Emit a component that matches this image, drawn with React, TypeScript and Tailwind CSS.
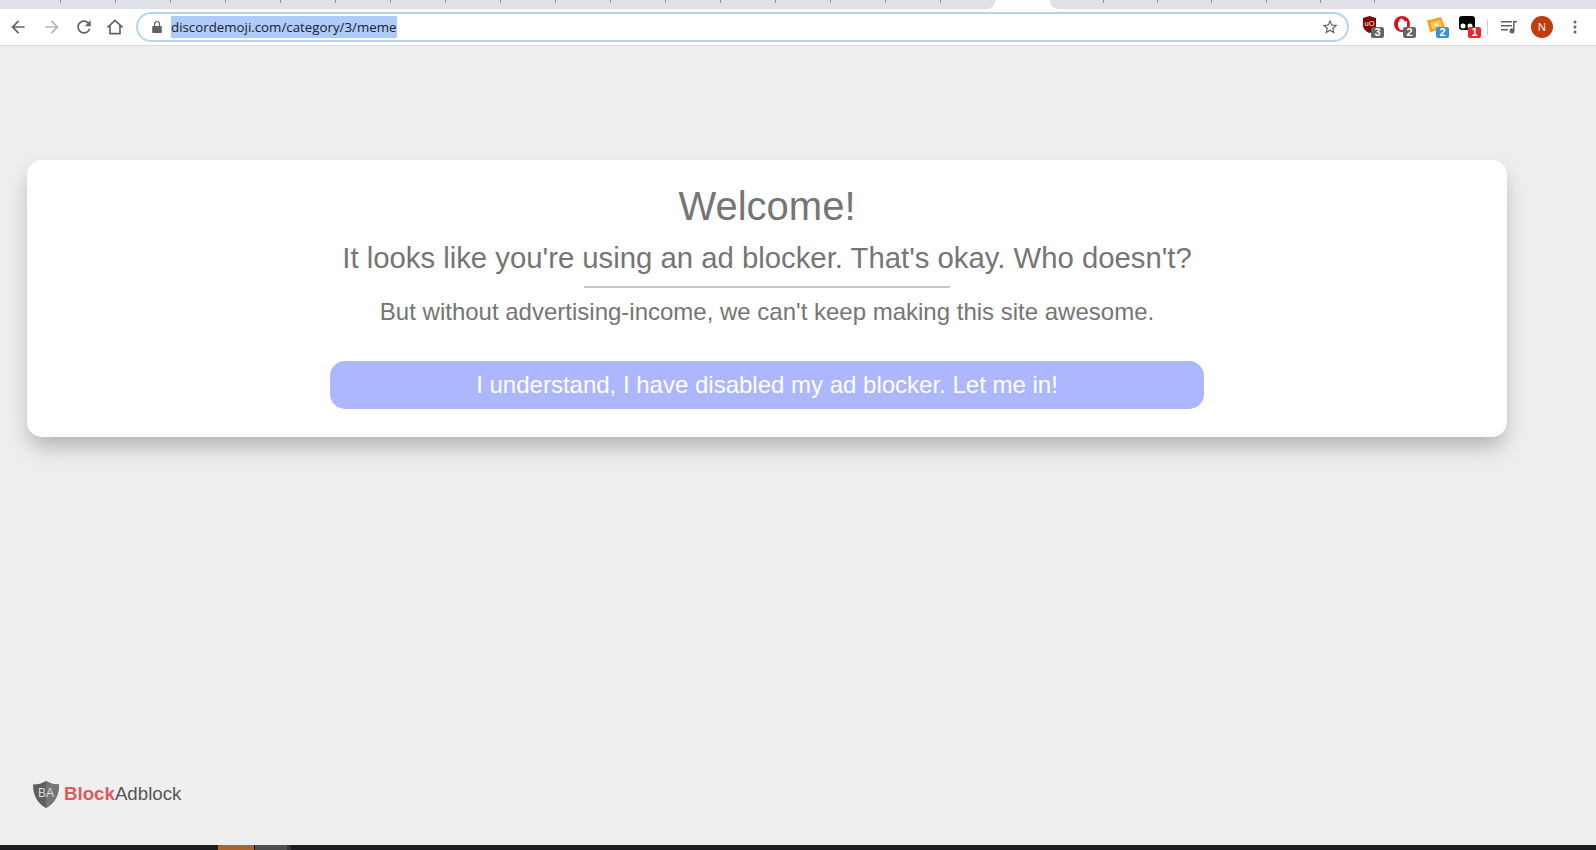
import { ReactNode } from "react";

const leftTabMarks = [0, 1, 2, 3, 4, 5, 6, 7, 8, 9, 10, 11, 12, 13, 14, 15, 16];
const rightTabMarks = [0, 1, 2, 3, 4, 5];

function Badge({ color, children }: { color: string; children: ReactNode }) {
  return (
    <span
      className={`absolute left-[9px] top-[11px] flex h-[11px] w-[13px] items-center justify-center rounded-[2px] font-['Liberation_Sans',sans-serif] text-[11px] leading-none font-bold text-white ${color}`}
    >
      {children}
    </span>
  );
}

function Toolbar() {
  return (
    <div className="flex h-[37px] shrink-0 items-center border-b border-[#d9dadc] bg-white">
      <div className="ml-[8px] flex items-center gap-[8px]">
        <svg className="h-[20px] w-[20px]" viewBox="0 0 24 24" fill="#5f6368">
          <path d="M20 11H7.83l5.59-5.59L12 4l-8 8 8 8 1.41-1.41L7.83 13H20v-2z" />
        </svg>
        <svg className="ml-[6px] h-[20px] w-[20px]" viewBox="0 0 24 24" fill="#b4b6b9">
          <path d="M4 11h12.17l-5.59-5.59L12 4l8 8-8 8-1.41-1.41L16.17 13H4v-2z" />
        </svg>
        <svg className="ml-[4px] h-[20px] w-[20px]" viewBox="0 0 24 24" fill="#5f6368">
          <path d="M17.65 6.35C16.2 4.9 14.21 4 12 4c-4.42 0-7.99 3.58-7.99 8s3.57 8 7.99 8c3.73 0 6.84-2.55 7.73-6h-2.08c-.82 2.33-3.04 4-5.65 4-3.31 0-6-2.69-6-6s2.69-6 6-6c1.66 0 3.14.69 4.22 1.78L13 11h7V4l-2.35 2.35z" />
        </svg>
        <svg className="ml-[3px] h-[20px] w-[20px]" viewBox="0 0 24 24" fill="none" stroke="#5f6368" strokeWidth="2">
          <path d="M3 12.5 12 4l9 8.5M6 10.5V20h12v-9.5" strokeLinejoin="round" />
        </svg>
      </div>

      <div className="ml-[11px] flex h-[30px] w-[1213px] items-center rounded-full border-2 border-[#b6d3f7] pr-[8px] pl-[12px]">
        <svg className="h-[14px] w-[14px]" viewBox="0 0 14 14" fill="#5f6368">
          <path d="M3 6h8a.8.8 0 0 1 .8.8v5.4a.8.8 0 0 1-.8.8H3a.8.8 0 0 1-.8-.8V6.800A.8.8 0 0 1 3 6Z" />
          <path d="M4.500 6V4a2.500 2.500 0 0 1 5 0v2" fill="none" stroke="#5f6368" strokeWidth="1.200" />
        </svg>
        <span className="ml-[7px] bg-[#aecbfa] font-['Open_Sans',sans-serif] text-[13.300px] leading-[22px] text-[#202124]">
          discordemoji.com/category/3/meme
        </span>
        <svg className="ml-auto h-[18px] w-[18px]" viewBox="0 0 24 24" fill="#5f6368">
          <path d="M22 9.240l-7.190-.620L12 2 9.190 8.630 2 9.240l5.460 4.730L5.820 21 12 17.270 18.180 21l-1.630-7.030L22 9.240zM12 15.400l-3.760 2.270 1-4.280-3.320-2.880 4.380-.380L12 6.100l1.710 4.040 4.380.380-3.320 2.880 1 4.280L12 15.400z" />
        </svg>
      </div>

      <div className="ml-[13px] flex items-center gap-[15px]">
        <div className="relative h-[22px] w-[17px]">
          <svg className="absolute top-0 left-0 h-[17px] w-[15px]" viewBox="0 0 15 17">
            <path d="M7.500 0 14 2v7c0 4-3 6.500-6.500 8C4 15.500 1 13 1 9V2Z" fill="#800000" />
            <text x="2.500" y="10" fontSize="7.500" fill="#ffffff" fontFamily="Liberation Sans, sans-serif">uO</text>
          </svg>
          <Badge color="bg-[#666666]">3</Badge>
        </div>
        <div className="relative h-[22px] w-[17px]">
          <svg className="absolute top-0 left-0 h-[16px] w-[16px]" viewBox="0 0 16 16">
            <circle cx="8" cy="8" r="8" fill="#d3141f" />
            <path d="M4 10V6h1.300V3.500h1.400V2.500h1.500v1h1.500V5h1.600v.5H13v5l-2 3.500H6Z" fill="#ffffff" />
          </svg>
          <Badge color="bg-[#666666]">2</Badge>
        </div>
        <div className="relative ml-[1px] h-[22px] w-[17px]">
          <svg className="absolute top-0 left-0 h-[17px] w-[18px]" viewBox="0 0 18 17">
            <path d="M0 4.500 14 1l4 10-13 5H3Z" fill="#f9a51a" />
            <rect x="4" y="5" width="10" height="7" fill="#fbc65e" transform="rotate(-14 9 8)" />
            <circle cx="9" cy="8.500" r="1.500" fill="#ffffff" />
          </svg>
          <Badge color="bg-[#3d8fd8]">2</Badge>
        </div>
        <div className="relative h-[22px] w-[17px]">
          <svg className="absolute top-0 left-0 h-[14px] w-[16px]" viewBox="0 0 16 14">
            <rect width="16" height="14" rx="3" fill="#000000" />
            <circle cx="4" cy="10" r="2.500" fill="#ffffff" />
            <circle cx="11" cy="10" r="2.500" fill="#ffffff" />
          </svg>
          <Badge color="bg-[#e8262d]">1</Badge>
        </div>
      </div>

      <div className="ml-[11px] h-[16px] w-px bg-[#d0d1d3]" />

      <svg className="ml-[13px] h-[17px] w-[17px]" viewBox="0 0 17 17" fill="#5f6368">
        <rect x="0" y="2" width="11" height="1.500" />
        <rect x="0" y="6" width="11" height="1.500" />
        <rect x="0" y="10" width="7" height="1.500" />
        <path d="M12 2h4v1.500h-2.500V12a2.500 2.500 0 1 1-1.500-2.300Z" />
      </svg>

      <div className="ml-[13px] flex h-[22px] w-[22px] items-center justify-center rounded-full bg-[#c23b0e] font-['Open_Sans',sans-serif] text-[11px] text-white">
        N
      </div>

      <svg className="ml-[20px] h-[16px] w-[4px]" viewBox="0 0 4 16" fill="#5f6368">
        <circle cx="2" cy="3" r="1.500" />
        <circle cx="2" cy="8" r="1.500" />
        <circle cx="2" cy="13" r="1.500" />
      </svg>
    </div>
  );
}

export default function App() {
  return (
    <div className="flex h-[850px] w-[1596px] flex-col overflow-hidden bg-[#eeeeee] font-['Liberation_Sans',Arial,sans-serif]">
      {/* tab strip, only its bottom edge is visible */}
      <div className="flex h-[9px] shrink-0 bg-white">
        <div className="flex w-[995px] gap-[54px] rounded-br-[8px] bg-[#dee1e6] pl-[60px]">
          {leftTabMarks.map((i) => (
            <span key={i} className="h-[3px] w-px bg-[#8d9096]" />
          ))}
        </div>
        <div className="ml-[55px] flex flex-1 gap-[53.200px] rounded-bl-[8px] bg-[#dee1e6] pl-[53px]">
          {rightTabMarks.map((i) => (
            <span key={i} className="h-[3px] w-px bg-[#8d9096]" />
          ))}
        </div>
      </div>

      <Toolbar />

      <main className="flex flex-1 flex-col">
        <div className="mt-[114px] ml-[27px] flex h-[277px] w-[1480px] flex-col items-center rounded-[15px] bg-white pt-[21px] text-[#757575] shadow-[0_12px_22px_-3px_rgba(0,0,0,0.26)]">
          <h1 className="text-[40px] leading-[50px]">Welcome!</h1>
          <p className="mt-[11px] text-[29.300px] leading-[32px]">
            It looks like you're using an ad blocker. That's okay. Who doesn't?
          </p>
          <div className="mt-[12px] h-[2px] w-[366px] bg-[#c8c8c8]" />
          <p className="mt-[10px] text-[24px] leading-[28px]">
            But without advertising-income, we can't keep making this site awesome.
          </p>
          <button className="mt-[35px] flex h-[48px] w-[874px] items-center justify-center rounded-[15px] bg-[#adb7ff] text-[24px] text-white">
            I understand, I have disabled my ad blocker. Let me in!
          </button>
        </div>

        <div className="mt-auto mb-[32px] ml-[28px] flex h-[38px] w-[158px] items-center rounded-[12px] bg-[#efefef] pl-[5px]">
          <svg className="h-[27px] w-[26px]" viewBox="0 0 26 27">
            <path d="M13 0C17 2.500 21 3.500 26 3.500 26 14 22 22 13 27 4 22 0 14 0 3.500 5 3.500 9 2.500 13 0Z" fill="#5f5f5f" />
            <path d="M13 0C17 2.500 21 3.500 26 3.500 26 14 22 22 13 27Z" fill="#757575" />
            <text x="13" y="15.500" textAnchor="middle" fontSize="12" fill="#dddddd" fontFamily="Liberation Sans, sans-serif">BA</text>
          </svg>
          <span className="ml-[5px] text-[18.700px] leading-none text-[#555555]">
            <span className="font-bold text-[#e0585e]">Block</span>Adblock
          </span>
        </div>
      </main>

      <div className="flex h-[5px] shrink-0 bg-[#1b1d20]">
        <div className="ml-[218px] w-[36px] bg-[#ab642b]" />
        <div className="ml-px w-[32px] bg-[#4d4e50]" />
        <div className="w-[4px] bg-[#333436]" />
      </div>
    </div>
  );
}
